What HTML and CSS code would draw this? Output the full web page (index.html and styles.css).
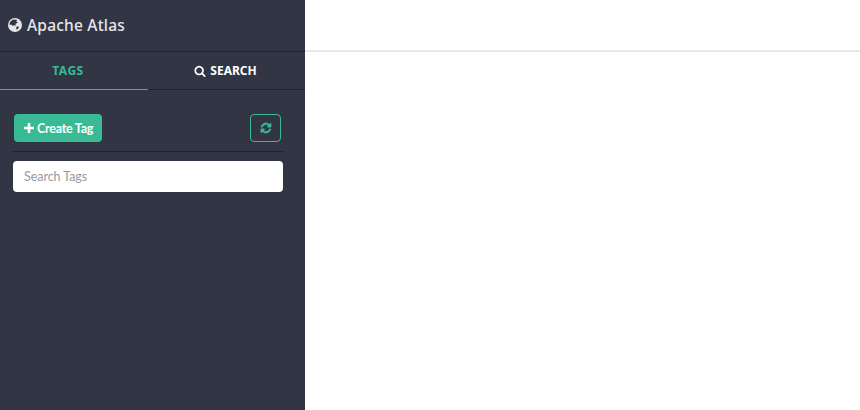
FILE: index.html
```html
<!DOCTYPE html>
<html lang="en">
<head>
    <meta charset="UTF-8">
    <meta name="viewport" content="width=device-width, initial-scale=1.0">
    <title>Apache Atlas</title>
    <link rel="stylesheet" href="styles.css">
</head>
<body>
    <div class="layout">
        <aside class="sidebar">
            <div class="brand">
                <svg class="brand-icon" viewBox="0 0 16 16">
                    <circle cx="8" cy="8" r="8" fill="#e6e6e9"/>
                    <path fill="#323544" d="M1.6 7.6C1.7 4.6 4 2 7 1.6c1.2-.1 2.4.1 3.4.6.2.8-.8 1.1-1.3 1.5.4.8 1.6.4 1.9 1.3-.5.9-1.6.7-2.2 1.4-.4.8.3 1.7-.3 2.4-.6.2-1-.7-1.7-.5-.8.1-.9 1-1.6.8-.6-.3-.2-1.2-.9-1.3-.9-.2-1.7.2-2.7-.2z"/>
                    <path fill="#323544" d="M9.8 10c.8-.4 2-.5 2.6.1.3.6-.2 1.2-.7 1.6-.6.7-.7 1.6-1.5 1.6-.7-.5-.6-1.4-.8-2.1-.1-.5.1-1 .4-1.2z"/>
                </svg>
                <span>Apache Atlas</span>
            </div>
            <div class="tabs">
                <div class="tab tab-active">TAGS</div>
                <div class="tab tab-search">
                    <svg class="tab-icon" viewBox="0 0 1792 1792"><path fill="currentColor" d="M1216 832q0-185-131.5-316.5t-316.5-131.5-316.5 131.5-131.5 316.5 131.5 316.5 316.5 131.5 316.5-131.5 131.5-316.5zm512 832q0 52-38 90t-90 38q-54 0-90-38l-343-342q-179 124-399 124-143 0-273.5-55.5t-225-150-150-225-55.5-273.5 55.5-273.5 150-225 225-150 273.5-55.5 273.5 55.5 225 150 150 225 55.5 273.5q0 220-124 399l343 343q37 37 37 90z"/></svg>
                    SEARCH
                </div>
            </div>
            <div class="panel">
                <div class="actions">
                    <button class="btn-create">
                        <svg class="plus-icon" viewBox="0 0 10 10"><path fill="currentColor" d="M3.7 0h2.6v3.7H10v2.6H6.3V10H3.7V6.3H0V3.7h3.7z"/></svg>
                        Create Tag
                    </button>
                    <button class="btn-refresh">
                        <svg class="refresh-icon" viewBox="0 0 1792 1792"><path fill="currentColor" stroke="currentColor" stroke-width="70" d="M1639 1056q0 5-1 7-64 268-268 434.5t-478 166.5q-146 0-282.5-55t-243.5-157l-129 129q-19 19-45 19t-45-19-19-45v-448q0-26 19-45t45-19h448q26 0 45 19t19 45-19 45l-137 137q71 66 161 102t187 36q134 0 250-65t186-179q11-17 53-117 8-23 30-23h192q13 0 22.5 9.5t9.5 22.5zm25-800v448q0 26-19 45t-45 19h-448q-26 0-45-19t-19-45 19-45l138-138q-148-137-349-137-134 0-250 65t-186 179q-11 17-53 117-8 23-30 23h-199q-13 0-22.5-9.5t-9.5-22.5v-7q65-268 270-434.5t480-166.5q146 0 284 55.5t245 156.5l130-129q19-19 45-19t45 19 19 45z"/></svg>
                    </button>
                </div>
                <input class="search-input" type="text" placeholder="Search Tags">
            </div>
        </aside>
        <main class="content">
            <div class="topbar"></div>
        </main>
    </div>
</body>
</html>
```
FILE: styles.css
```css
/* page */
html, body {
    margin: 0;
    height: 100%;
    overflow: hidden;
    background-color: #fff;
    font-family: Lato, "Noto Sans", sans-serif;
}

.layout {
    display: flex;
    height: 100%;
}

/* sidebar */
.sidebar {
    width: 305px;
    flex-shrink: 0;
    background-color: #323544;
}

.brand {
    display: flex;
    align-items: center;
    gap: 5px;
    height: 52px;
    padding: 0 0 2px 8px;
    box-sizing: border-box;
    border-bottom: 1px solid #1f212b;
    color: #e6e6e9;
    font-family: "Noto Sans", sans-serif;
    font-size: 15.5px;
    font-weight: 500;
    letter-spacing: 0.2px;
}

.brand-icon {
    width: 14px;
    height: 14px;
}

.tabs {
    display: flex;
    height: 38px;
}

.tab {
    display: flex;
    align-items: center;
    justify-content: center;
    gap: 4px;
    box-sizing: border-box;
    border-bottom: 1px solid #1f212b;
    color: #fff;
    font-family: "Noto Sans", sans-serif;
    font-size: 12px;
    font-weight: 700;
}

.tab-active {
    width: 148px;
    padding-right: 12px;
    border-bottom-color: #38bb95;
    color: #38bb95;
    letter-spacing: 0.5px;
}

.tab-search {
    flex: 1;
    padding-right: 2px;
}

.tab-icon {
    width: 12px;
    height: 12px;
}

.panel {
    padding: 24px 22px 0 13px;
    width: 270px;
}

.actions {
    display: flex;
    justify-content: space-between;
    padding: 0 2px 9px 1px;
    border-bottom: 1px solid #1f212b;
    margin-bottom: 9px;
}

.btn-create {
    display: flex;
    align-items: center;
    gap: 3px;
    height: 28px;
    width: 88px;
    padding: 0 0 0 10px;
    border: 0;
    border-radius: 4px;
    background-color: #38bb95;
    color: #fff;
    font-family: inherit;
    font-size: 12.5px;
    font-weight: 700;
    letter-spacing: -0.25px;
}

.plus-icon {
    width: 10px;
    height: 10px;
}

.btn-refresh {
    display: flex;
    align-items: center;
    justify-content: center;
    width: 31px;
    height: 28px;
    padding: 0;
    border: 1px solid #38bb95;
    border-radius: 4px;
    background: none;
    color: #38bb95;
}

.refresh-icon {
    width: 12px;
    height: 12px;
}

.search-input {
    display: block;
    width: 100%;
    height: 31px;
    box-sizing: border-box;
    padding: 0 11px;
    border: 0;
    border-radius: 4px;
    background-color: #fff;
    font-family: inherit;
    font-size: 12.4px;
}

.search-input::placeholder {
    color: #999;
    opacity: 1;
}

/* right side */
.content {
    flex: 1;
}

.topbar {
    height: 50px;
    border-bottom: 2px solid #e8e8ec;
}
```
